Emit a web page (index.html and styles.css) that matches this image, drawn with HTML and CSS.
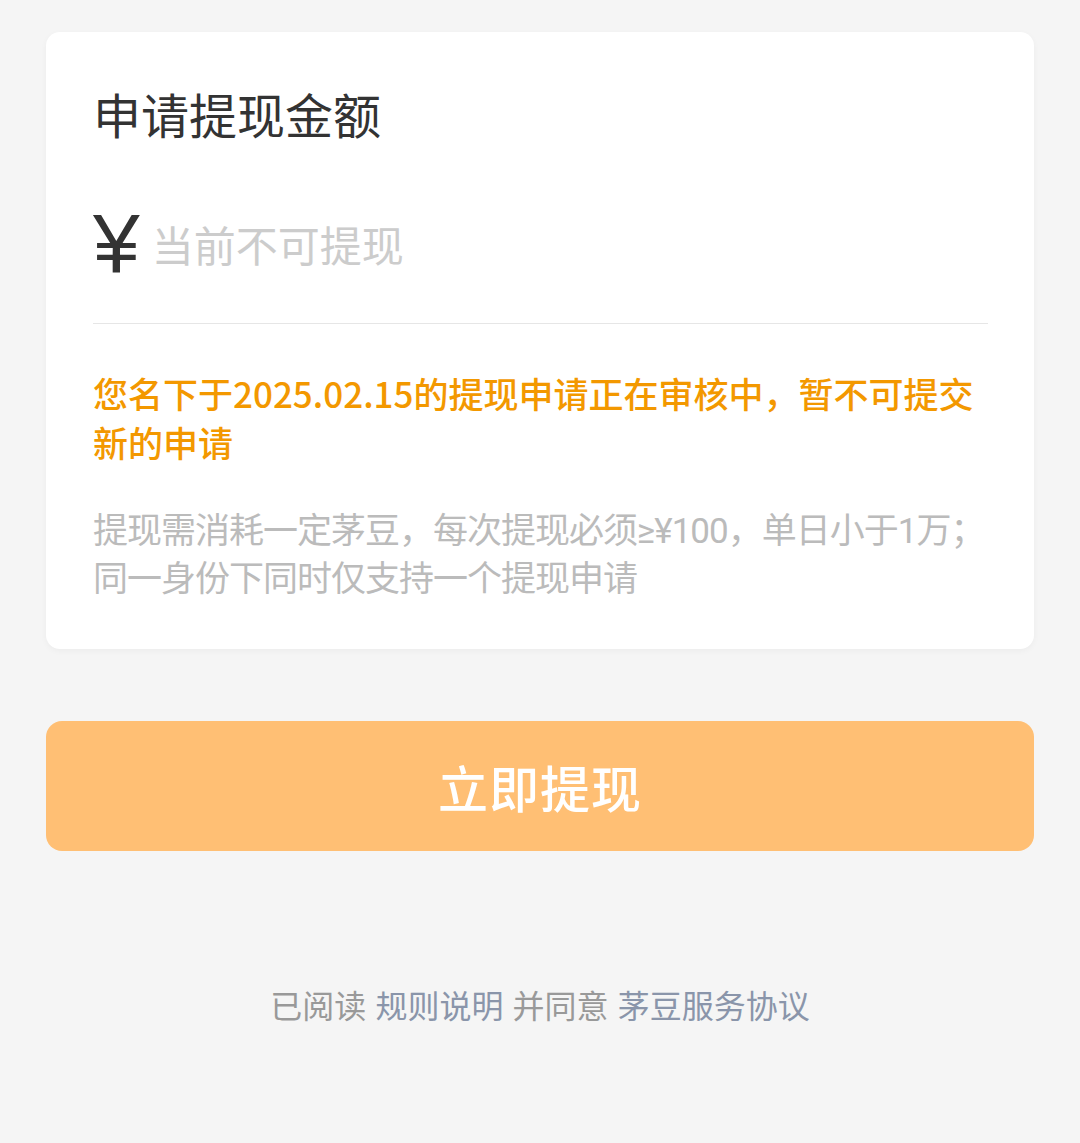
FILE: index.html
```html
<!DOCTYPE html>
<html lang="zh-CN">
<head>
    <meta charset="UTF-8">
    <meta name="viewport" content="width=device-width, initial-scale=1.0">
    <title>申请提现</title>
    <link rel="stylesheet" href="styles.css">
</head>
<body>
    <div class="card">
        <h1 class="card-title">申请提现金额</h1>
        <div class="amount-row">
            <span class="currency">¥</span>
            <input class="amount-input" type="text" placeholder="当前不可提现" disabled>
        </div>
        <p class="notice">您名下于2025.02.15的提现申请正在审核中，暂不可提交新的申请</p>
        <p class="rules">提现需消耗一定茅豆，每次提现必须≥¥100，单日小于1万；同一身份下同时仅支持一个提现申请</p>
    </div>

    <button class="submit-btn" disabled>立即提现</button>

    <div class="agreement">
        已阅读 <a href="#">规则说明</a> 并同意 <a href="#">茅豆服务协议</a>
    </div>
</body>
</html>
```

FILE: styles.css
```css
body {
    margin: 0;
    padding: 32px 46px 0;
    background-color: #f5f5f5;
    font-family: "Noto Sans CJK SC", "Noto Sans", sans-serif;
    color: #333;
}
.card {
    background: #fff;
    border-radius: 14px;
    box-shadow: 0 2px 6px rgba(0, 0, 0, 0.04);
    padding: 48px 46px 45px 47px;
}
.card-title {
    margin: 0;
    font-size: 48px;
    font-weight: normal;
    line-height: 66px;
    color: #333;
}
.amount-row {
    display: flex;
    align-items: center;
    height: 100px;
    padding: 47px 0 30px;
    border-bottom: 1px solid #e6e6e6;
}
.currency {
    font-size: 84px;
    line-height: 1;
    color: #333;
    font-family: "Liberation Sans", sans-serif;
    margin-right: 12px;
}
.amount-input {
    flex: 1;
    border: none;
    outline: none;
    background: transparent;
    font-family: inherit;
    font-size: 42px;
    padding: 0;
    color: #333;
}
.amount-input::placeholder {
    color: #cccccc;
}
.notice {
    margin: 44px 0 0;
    font-size: 35px;
    line-height: 49px;
    color: #f39800;
    font-weight: 500;
}
.rules {
    margin: 42px 0 0;
    font-family: Roboto, "Noto Sans CJK SC", sans-serif;
    font-size: 35px;
    line-height: 48px;
    letter-spacing: -1px;
    color: #bbbbbb;
}
.submit-btn {
    display: block;
    width: 100%;
    height: 130px;
    margin-top: 72px;
    border: none;
    border-radius: 16px;
    background: #ffbf74;
    color: #fff;
    font-family: inherit;
    font-size: 50px;
    font-weight: 500;
    letter-spacing: 1px;
}
.agreement {
    margin-top: 131px;
    text-align: center;
    font-size: 32px;
    line-height: 44px;
    word-spacing: 2px;
    color: #999;
}
.agreement a {
    color: #8a95aa;
    text-decoration: none;
}
```
